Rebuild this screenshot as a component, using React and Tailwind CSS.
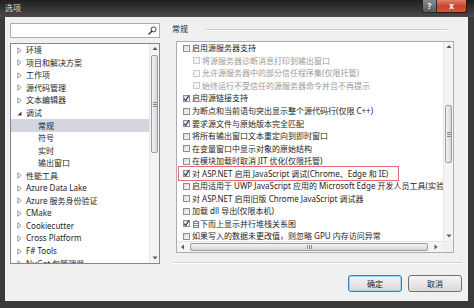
import React from 'react';

const treeItems = [
  { label: '环境', kind: 'closed' },
  { label: '项目和解决方案', kind: 'closed' },
  { label: '工作项', kind: 'closed' },
  { label: '源代码管理', kind: 'closed' },
  { label: '文本编辑器', kind: 'closed' },
  { label: '调试', kind: 'open' },
  { label: '常规', kind: 'child', selected: true },
  { label: '符号', kind: 'child' },
  { label: '实时', kind: 'child' },
  { label: '输出窗口', kind: 'child' },
  { label: '性能工具', kind: 'closed' },
  { label: 'Azure Data Lake', kind: 'closed' },
  { label: 'Azure 服务身份验证', kind: 'closed' },
  { label: 'CMake', kind: 'closed' },
  { label: 'Cookiecutter', kind: 'closed' },
  { label: 'Cross Platform', kind: 'closed' },
  { label: 'F# Tools', kind: 'closed' },
  { label: 'NuGet 包管理器', kind: 'closed' },
];

const options = [
  { label: '启用源服务器支持' },
  { label: '将源服务器诊断消息打印到输出窗口', nested: true },
  { label: '允许源服务器中的部分信任程序集(仅限托管)', nested: true },
  { label: '始终运行不受信任的源服务器命令并且不再提示', nested: true },
  { label: '启用源链接支持', checked: true },
  { label: '为断点和当前语句突出显示整个源代码行(仅限 C++)' },
  { label: '要求源文件与原始版本完全匹配', checked: true },
  { label: '将所有输出窗口文本重定向到即时窗口' },
  { label: '在变量窗口中显示对象的原始结构' },
  { label: '在模块加载时取消 JIT 优化(仅限托管)' },
  { label: '对 ASP.NET 启用 JavaScript 调试(Chrome、Edge 和 IE)', checked: true },
  { label: '启用适用于 UWP JavaScript 应用的 Microsoft Edge 开发人员工具(实验版)' },
  { label: '对 ASP.NET 启用旧版 Chrome JavaScript 调试器' },
  { label: '加载 dll 导出(仅限本机)' },
  { label: '自下而上显示并行堆栈关系图', checked: true },
  { label: '如果写入的数据未更改值，则忽略 GPU 内存访问异常' },
];

const Arrow = ({ dir }) => {
  const paths = {
    up: 'M0.5 4 L3 1 L5.5 4 Z',
    down: 'M0.5 1.5 L3 4.5 L5.5 1.5 Z',
    left: 'M4 0.5 L1 3 L4 5.5 Z',
    right: 'M1.5 0.5 L4.5 3 L1.5 5.5 Z',
  };
  return (
    <svg width="6" height="6" viewBox="0 0 6 6">
      <path d={paths[dir]} fill="#5a5a5a" />
    </svg>
  );
};

const Grip = ({ vertical }) => (
  <div className={`flex ${vertical ? 'flex-col gap-[1px]' : 'flex-row gap-[1px]'}`}>
    {[0, 1, 2].map((i) => (
      <div key={i} className={vertical ? 'w-[4px] h-[1px] bg-[#8a8a8a]' : 'w-[1px] h-[4px] bg-[#8a8a8a]'} />
    ))}
  </div>
);

const Check = ({ checked, disabled }) => (
  <span
    className={`w-[7px] h-[7px] shrink-0 border flex items-center justify-center ${
      disabled ? 'border-[#cacaca] bg-[#f6f6f6]' : 'border-[#8e8f8f] bg-gradient-to-br from-[#d9d9d9] to-[#fbfbfb]'
    }`}
  >
    {checked && (
      <svg width="7" height="7" viewBox="0 0 7 7" className="overflow-visible">
        <path d="M1 3.6 L2.7 5.6 L5.8 0.6" stroke="#24346a" strokeWidth="1.1" fill="none" />
      </svg>
    )}
  </span>
);

const TreeArrow = ({ kind }) => {
  if (kind === 'open') {
    return (
      <svg width="5" height="5" viewBox="0 0 5 5">
        <path d="M4.5 0.5 L4.5 4.5 L0.5 4.5 Z" fill="#3c3c3c" />
      </svg>
    );
  }
  return (
    <svg width="5" height="7" viewBox="0 0 5 7">
      <path d="M0.8 0.8 L4.2 3.5 L0.8 6.2 Z" fill="#fff" stroke="#8c8c8c" strokeWidth="0.9" />
    </svg>
  );
};

export default function App() {
  return (
    <div className="w-[474px] h-[308px] bg-[#3a3a3a] flex flex-col overflow-hidden select-none font-['Noto_Sans','Noto_Sans_CJK_SC',sans-serif]">
      {/* title bar */}
      <div className="h-[17px] shrink-0 flex items-start bg-gradient-to-b from-[#1f1f1f] via-[#353535] to-[#4a4a4a]">
        <span className="ml-[5px] mt-[3px] text-[8px] leading-[10px] text-[#dcdcdc]">选项</span>
        <div className="ml-auto mr-[7px] flex">
          <div className="w-[15px] h-[13px] rounded-bl-[3px] border border-t-0 border-[#2a2a2a] bg-gradient-to-b from-[#8a8a8a] to-[#5a5a5a] flex items-center justify-center text-[8px] leading-none font-bold text-white">
            ?
          </div>
          <div className="w-[30px] h-[13px] rounded-br-[3px] border border-t-0 border-l-0 border-[#3a1010] bg-gradient-to-b from-[#e2806a] via-[#c9432c] to-[#d2573f] flex items-center justify-center text-[8px] leading-none font-bold text-white">
            x
          </div>
        </div>
      </div>

      {/* client area */}
      <div className="ml-[5px] w-[463px] h-[284px] bg-[#f0f0f0] flex flex-col pl-[5px] pr-[6px] pt-[6px]">
        <div className="flex h-[241px]">
          {/* left column */}
          <div className="w-[150px] flex flex-col">
            <div className="h-[15px] bg-white border border-[#abadb3] flex items-center justify-end pr-[2px]">
              <svg width="9" height="9" viewBox="0 0 9 9">
                <circle cx="5.6" cy="3.4" r="2.5" fill="none" stroke="#3a3a3a" strokeWidth="1" />
                <path d="M3.8 5.2 L1 8" stroke="#3a3a3a" strokeWidth="1.4" strokeLinecap="round" />
              </svg>
            </div>
            <div className="mt-[5px] h-[221px] bg-white border border-[#828790] flex overflow-hidden">
              <div className="flex-1 overflow-hidden">
                {treeItems.map((t) => (
                  <div
                    key={t.label}
                    className={`h-[12.56px] flex items-center text-[8px] leading-none text-[#1e1e1e] whitespace-nowrap ${
                      t.selected ? 'bg-[#d3d6e0]' : ''
                    }`}
                  >
                    {t.kind === 'child' ? (
                      <span className="ml-[27px]">{t.label}</span>
                    ) : (
                      <>
                        <span className="ml-[6px] w-[5px] flex items-center justify-center">
                          <TreeArrow kind={t.kind} />
                        </span>
                        <span className="ml-[4px]">{t.label}</span>
                      </>
                    )}
                  </div>
                ))}
              </div>
              {/* tree scrollbar */}
              <div className="w-[10px] bg-[#f4f4f4] border-l border-[#e6e6e6] flex flex-col">
                <div className="h-[10px] flex items-center justify-center">
                  <Arrow dir="up" />
                </div>
                <div className="mt-[1px] mx-[1px] h-[98px] rounded-[2px] border border-[#9d9d9d] bg-gradient-to-r from-[#f3f3f3] to-[#d6d6d6] flex items-center justify-center">
                  <Grip vertical />
                </div>
                <div className="flex-1" />
                <div className="h-[10px] flex items-center justify-center">
                  <Arrow dir="down" />
                </div>
              </div>
            </div>
          </div>

          {/* right column */}
          <div className="ml-[12px] flex-1 flex flex-col">
            <div className="h-[18px] flex items-start">
              <span className="mt-[1px] text-[8px] leading-[10px] text-[#1e1e1e]">常规</span>
              <div className="ml-[18px] mr-[15px] mt-[6px] flex-1 h-[2px] border-t border-[#c9c9c9] border-b border-b-white" />
            </div>
            <div className="ml-[4px] w-[278px] h-[212px] bg-white border border-[#adadad] flex flex-col relative">
              <div className="flex flex-1 overflow-hidden">
                <div className="flex-1 overflow-hidden">
                  {options.map((o) => (
                    <div key={o.label} className="h-[12.56px] flex items-center whitespace-nowrap text-[8px] leading-none">
                      <span className={o.nested ? 'ml-[16px]' : 'ml-[6px]'}>
                        <Check checked={o.checked} disabled={o.nested} />
                      </span>
                      <span className={`ml-[2px] ${o.nested ? 'text-[#9a9a9a]' : 'text-[#1e1e1e]'}`}>{o.label}</span>
                    </div>
                  ))}
                </div>
                {/* list vertical scrollbar */}
                <div className="w-[10px] bg-[#f4f4f4] border-l border-[#e6e6e6] flex flex-col">
                  <div className="h-[10px] flex items-center justify-center">
                    <Arrow dir="up" />
                  </div>
                  <div className="mt-[53px] mx-[1px] h-[58px] rounded-[2px] border border-[#9d9d9d] bg-gradient-to-r from-[#f3f3f3] to-[#d6d6d6] flex items-center justify-center">
                    <Grip vertical />
                  </div>
                  <div className="flex-1" />
                  <div className="h-[10px] flex items-center justify-center">
                    <Arrow dir="down" />
                  </div>
                </div>
              </div>
              {/* horizontal scrollbar */}
              <div className="h-[11px] flex bg-[#f4f4f4] border-t border-[#e6e6e6]">
                <div className="w-[11px] flex items-center justify-center">
                  <Arrow dir="left" />
                </div>
                <div className="ml-[2px] my-[1px] w-[238px] rounded-[2px] border border-[#9d9d9d] bg-gradient-to-b from-[#f3f3f3] to-[#d6d6d6] flex items-center justify-center">
                  <Grip />
                </div>
                <div className="flex-1 flex items-center justify-center">
                  <Arrow dir="right" />
                </div>
                <div className="w-[10px] bg-[#f0f0f0]" />
              </div>
              {/* highlight annotation */}
              <div className="absolute left-[1px] top-[124px] w-[221px] h-[15px] border border-[#e36b76] pointer-events-none" />
            </div>
            <div className="mt-[9px] h-[2px] border-t border-[#d5d5d5] border-b border-b-white" />
          </div>
        </div>

        {/* buttons */}
        <div className="mt-[11px] flex justify-end gap-[6px]">
          <div className="w-[54px] h-[17px] rounded-[3px] border border-[#3c7fb1] bg-gradient-to-b from-[#f4f4f4] via-[#e8e8e8] to-[#d9d9d9] shadow-[inset_0_0_0_1px_#9bd3f0] flex items-center justify-center text-[8px] leading-none text-[#1e1e1e]">
            确定
          </div>
          <div className="w-[54px] h-[17px] rounded-[3px] border border-[#707070] bg-gradient-to-b from-[#f4f4f4] via-[#e8e8e8] to-[#d9d9d9] flex items-center justify-center text-[8px] leading-none text-[#1e1e1e]">
            取消
          </div>
        </div>
      </div>
    </div>
  );
}
